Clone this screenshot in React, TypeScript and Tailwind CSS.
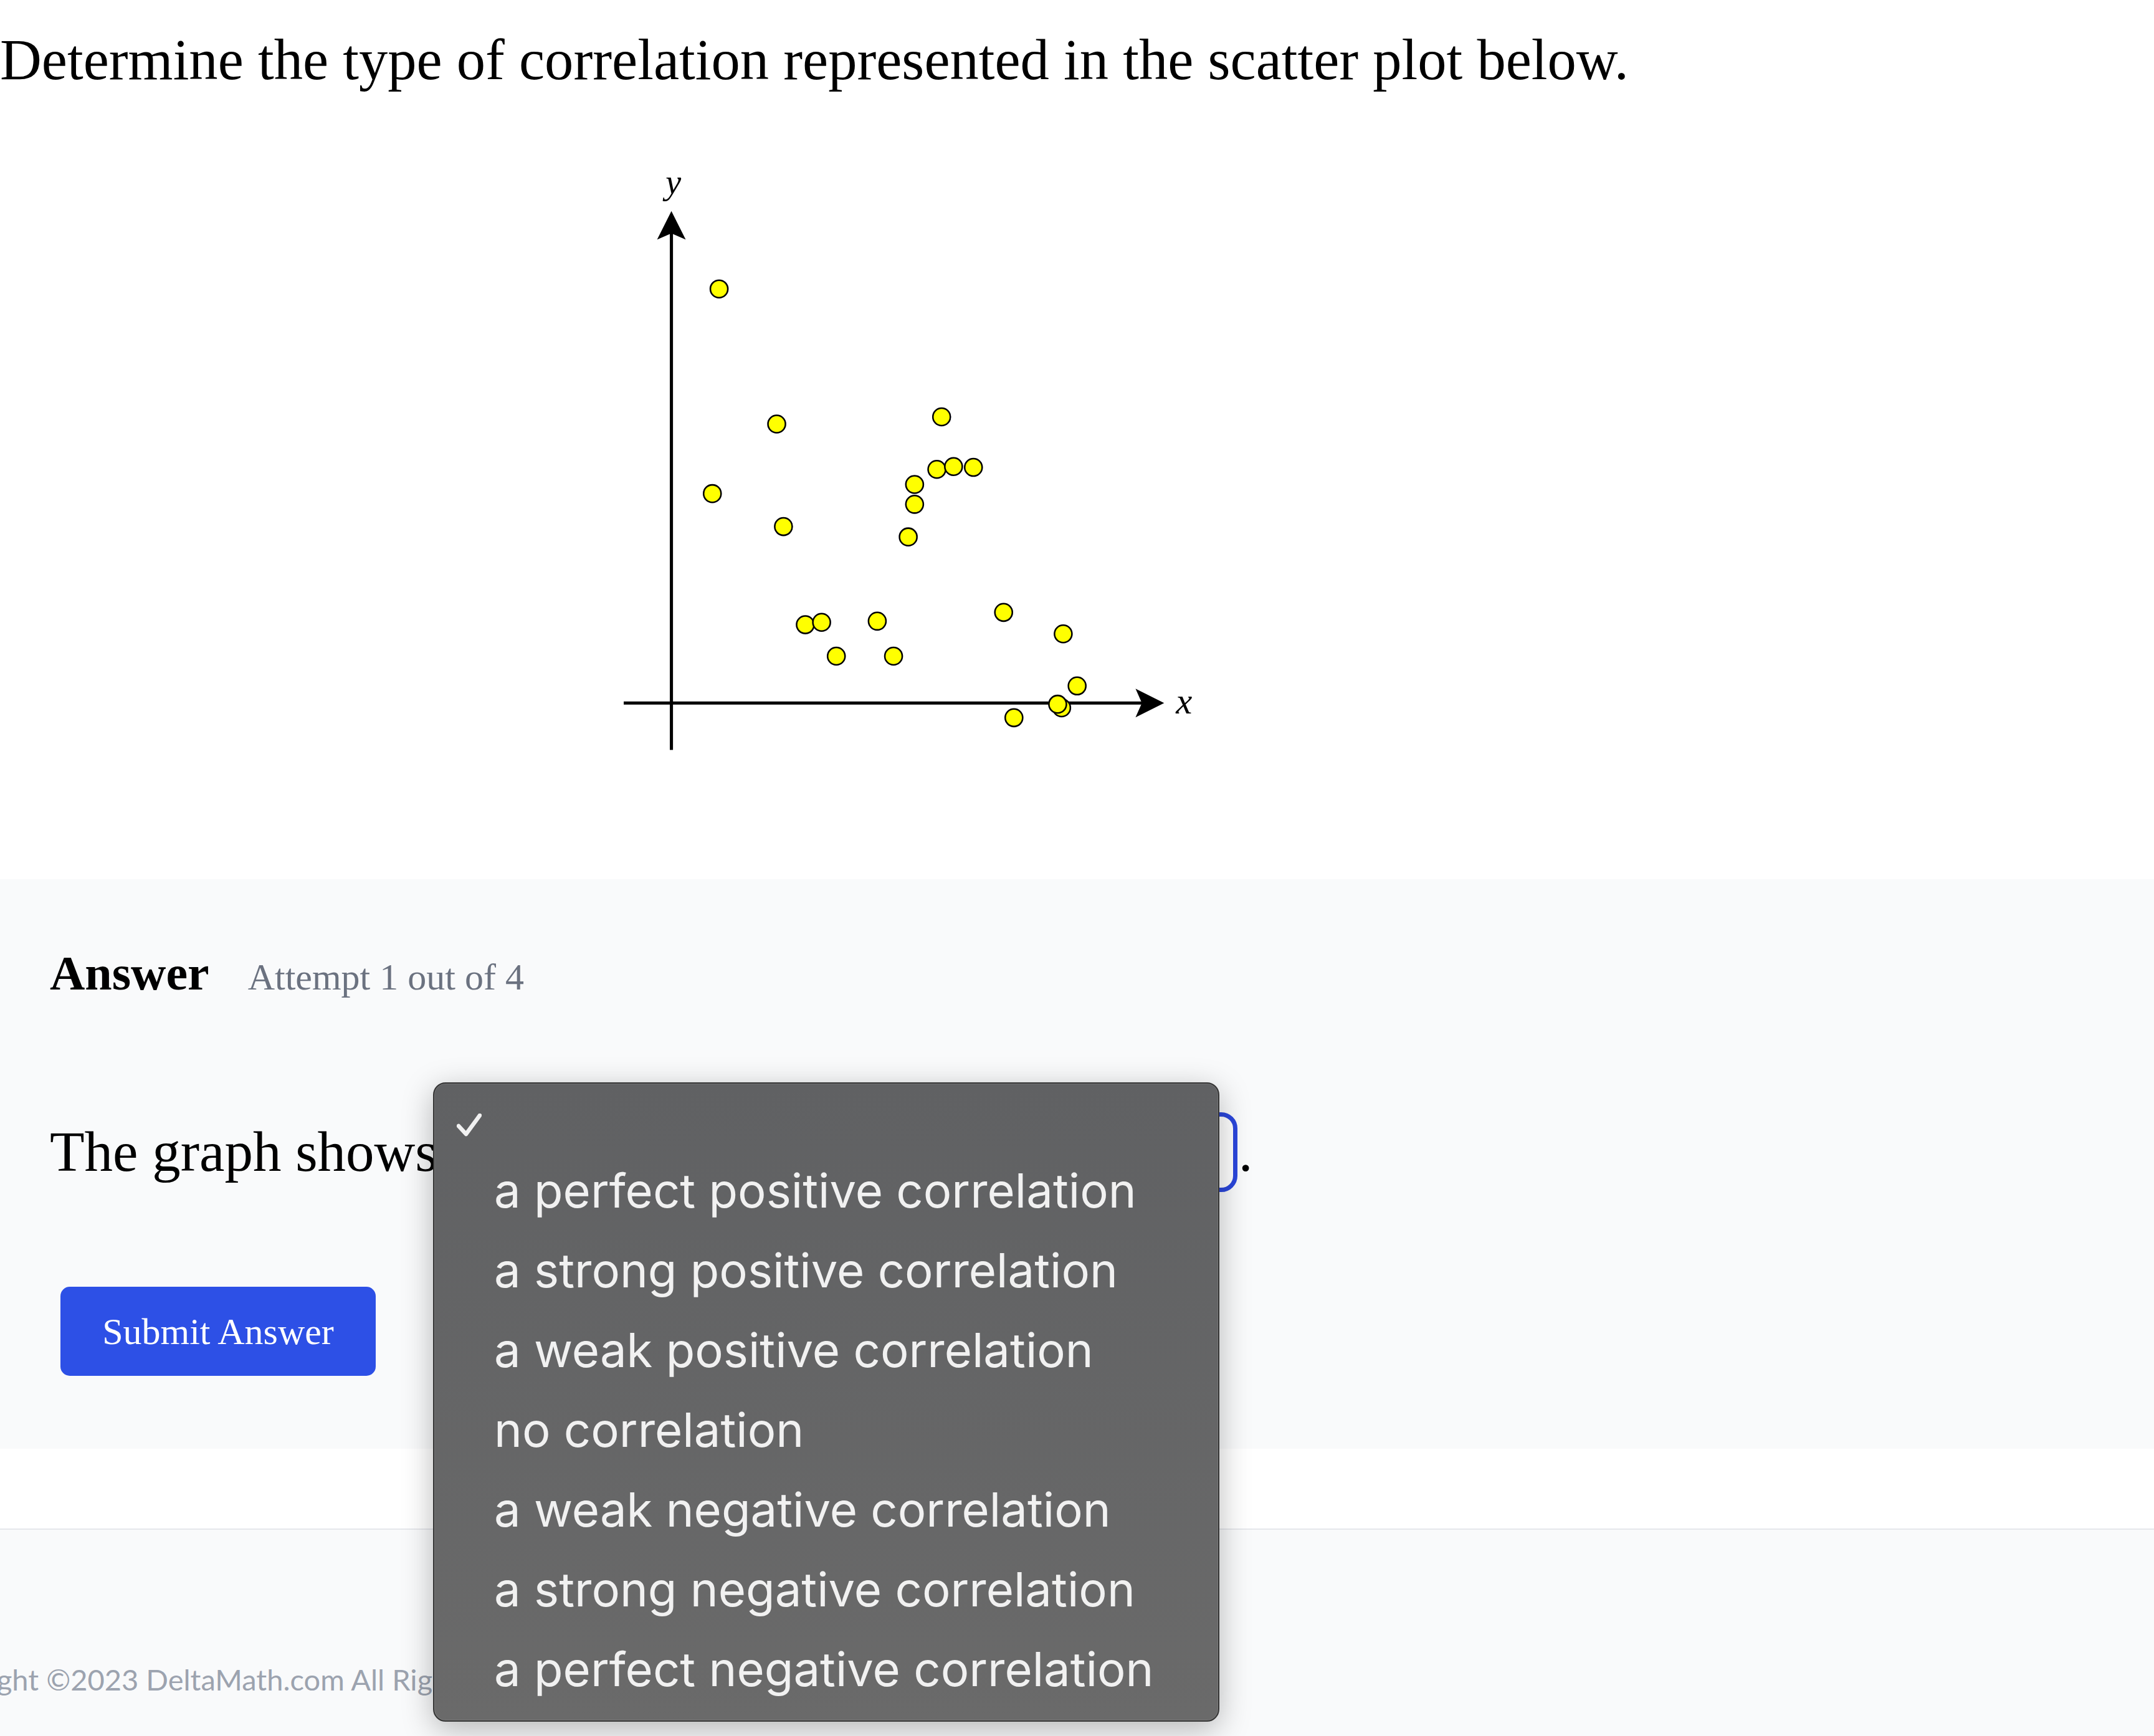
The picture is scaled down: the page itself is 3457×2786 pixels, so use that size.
import React from "react";

// scatter points, in the plot's own 1568-unit box
const POINTS: [number, number][] = [
  [320, 368],
  [465, 708],
  [303, 883],
  [482, 966],
  [880, 690],
  [868, 822],
  [910, 815],
  [960, 817],
  [812, 860],
  [812, 910],
  [796, 992],
  [537, 1213],
  [578, 1207],
  [718, 1204],
  [615, 1292],
  [759, 1292],
  [1036, 1182],
  [1186, 1236],
  [1221, 1367],
  [1182, 1422],
  [1172, 1413],
  [1062, 1447],
];

const OPTIONS = [
  "a perfect positive correlation",
  "a strong positive correlation",
  "a weak positive correlation",
  "no correlation",
  "a weak negative correlation",
  "a strong negative correlation",
  "a perfect negative correlation",
];

function ScatterPlot() {
  return (
    <svg width={1000} height={1000} viewBox="0 0 1568 1568">
      <line x1={200} y1={220} x2={200} y2={1528} stroke="#000" strokeWidth={8} />
      <path d="M200 172 L236 244 L200 228 L164 244 Z" fill="#000" />
      <line x1={80} y1={1410} x2={1390} y2={1410} stroke="#000" strokeWidth={8} />
      <path d="M1440 1410 L1368 1446 L1384 1410 L1368 1374 Z" fill="#000" />
      <text
        x={205}
        y={128}
        textAnchor="middle"
        fontSize={88}
        fontStyle="italic"
        fontFamily="Liberation Serif, serif"
      >
        y
      </text>
      <text
        x={1490}
        y={1437}
        textAnchor="middle"
        fontSize={92}
        fontStyle="italic"
        fontFamily="Liberation Serif, serif"
      >
        x
      </text>
      {POINTS.map(([cx, cy], i) => (
        <circle key={i} cx={cx} cy={cy} r={22} fill="#ffff00" stroke="#000" strokeWidth={4} />
      ))}
    </svg>
  );
}

function SelectMenu() {
  return (
    <div className="absolute left-[695px] top-[1737px] w-[1262px] h-[1026px] rounded-[20px] border-2 border-[#353535] bg-linear-to-b from-[#606163] to-[#6a6a6a] shadow-[0_12px_50px_rgba(0,0,0,0.28),inset_0_0_0_1px_rgba(255,255,255,0.12)] font-['Inter',sans-serif] text-[#f1f1f1]">
      <div className="h-[107px] pl-[36px] pt-[48px]">
        <svg width={40} height={38} viewBox="0 0 40 38">
          <polyline
            points="3,20 15,33 37,3"
            fill="none"
            stroke="#f1f1f1"
            strokeWidth={6.5}
            strokeLinecap="round"
            strokeLinejoin="round"
          />
        </svg>
      </div>
      {OPTIONS.map((o) => (
        <div key={o} className="h-[128px] pl-[96px] text-[76px] leading-[128px] whitespace-nowrap">
          {o}
        </div>
      ))}
    </div>
  );
}

export default function App() {
  return (
    <div className="relative min-h-[2786px] w-full overflow-hidden bg-white font-['Liberation_Serif','Times_New_Roman',serif] text-black">
      <h1 className="pt-[46px] text-[92.6px] leading-[100px] font-normal whitespace-nowrap">
        Determine the type of correlation represented in the scatter plot below.
      </h1>

      <div className="mt-[83px] pl-[950px]">
        <ScatterPlot />
      </div>

      <section className="mt-[182px] bg-[#f9fafb] pl-[80px] pt-[101px] pb-[117px]">
        <div className="flex items-baseline">
          <span className="text-[78px] leading-[100px] font-bold">Answer</span>
          <span className="ml-[62px] text-[60px] leading-[100px] text-[#6b7280]">Attempt 1 out of 4</span>
        </div>

        <div className="mt-[167px] flex items-center">
          <span className="text-[91px] leading-[128px] whitespace-nowrap">The graph shows</span>
          <span className="ml-[22px] box-border h-[128px] w-[1262px] rounded-[26px] border-[7px] border-[#2b47dc] bg-white" />
          <span className="ml-[2px] text-[91px] leading-[128px]">.</span>
        </div>

        <button className="mt-[152px] ml-[17px] h-[143px] w-[506px] rounded-[15px] bg-[#2d50e6] text-[60px] text-white">
          Submit Answer
        </button>
      </section>

      <div className="h-[128px] bg-white" />

      <footer className="min-h-[339px] border-t-2 border-[#e5e7eb] bg-[#f9fafb] pt-[210px]">
        <p className="-ml-[141px] whitespace-nowrap font-['Lato',sans-serif] text-[47px] leading-[60px] text-[#9ca3af]">
          Copyright ©2023 DeltaMath.com All Rights Reserved.
        </p>
      </footer>

      <SelectMenu />
    </div>
  );
}
